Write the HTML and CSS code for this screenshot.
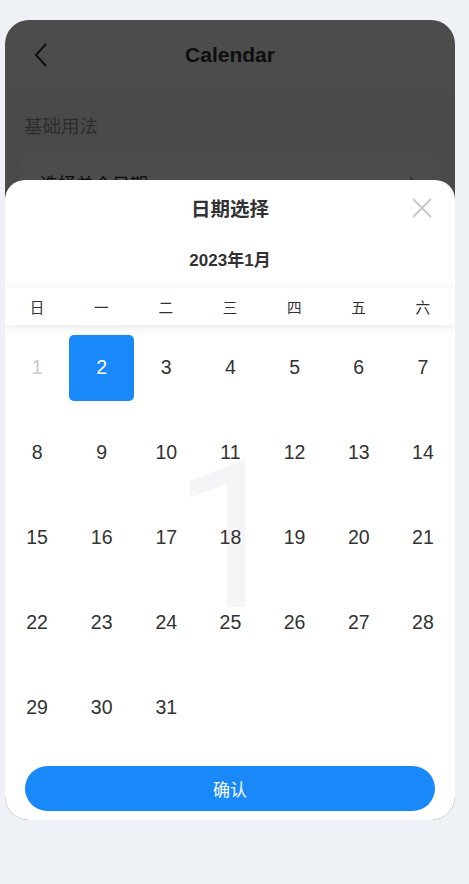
FILE: index.html
```html
<!DOCTYPE html>
<html lang="zh-CN">
<head>
<meta charset="utf-8">
<title>Calendar</title>
<link rel="stylesheet" href="styles.css">
</head>
<body>
<div class="phone">
  <div class="nav">
    <svg class="nav-back" width="16" height="26" viewBox="0 0 16 26"><path d="M13 2 L3 13 L13 24" fill="none" stroke="#323233" stroke-width="2"/></svg>
    <div class="nav-title">Calendar</div>
  </div>
  <div class="demo-title">基础用法</div>
  <div class="cell">
    <span class="cell-text">选择单个日期</span>
    <svg class="cell-arrow" width="10" height="16" viewBox="0 0 10 16"><path d="M2 2 L8 8 L2 14" fill="none" stroke="#969799" stroke-width="1.6"/></svg>
  </div>

  <div class="overlay"></div>

  <div class="popup">
    <div class="cal-header">
      <div class="cal-title">日期选择</div>
      <svg class="cal-close" width="22" height="22" viewBox="0 0 22 22"><path d="M2 2 L20 20 M20 2 L2 20" fill="none" stroke="#c8c9cc" stroke-width="2"/></svg>
    </div>
    <div class="cal-month">2023年1月</div>
    <div class="weekdays">
      <span>日</span><span>一</span><span>二</span><span>三</span><span>四</span><span>五</span><span>六</span>
    </div>
    <div class="days">
      <div class="month-mark">1</div>
      <div class="day disabled">1</div>
      <div class="day"><span class="selected">2</span></div>
      <div class="day">3</div>
      <div class="day">4</div>
      <div class="day">5</div>
      <div class="day">6</div>
      <div class="day">7</div>
      <div class="day">8</div>
      <div class="day">9</div>
      <div class="day">10</div>
      <div class="day">11</div>
      <div class="day">12</div>
      <div class="day">13</div>
      <div class="day">14</div>
      <div class="day">15</div>
      <div class="day">16</div>
      <div class="day">17</div>
      <div class="day">18</div>
      <div class="day">19</div>
      <div class="day">20</div>
      <div class="day">21</div>
      <div class="day">22</div>
      <div class="day">23</div>
      <div class="day">24</div>
      <div class="day">25</div>
      <div class="day">26</div>
      <div class="day">27</div>
      <div class="day">28</div>
      <div class="day">29</div>
      <div class="day">30</div>
      <div class="day">31</div>
    </div>
    <div class="cal-footer">
      <button class="confirm">确认</button>
    </div>
  </div>
</div>
</body>
</html>
```

FILE: styles.css
```css
* { box-sizing: border-box; }
html, body { margin: 0; padding: 0; }
body {
  background: #eef1f5;
  font-family: "Liberation Sans", "Noto Sans CJK SC", sans-serif;
  color: #323233;
  width: 469px;
  height: 884px;
  overflow: hidden;
}
.phone {
  position: relative;
  margin: 20px 0 0 5px;
  width: 450px;
  height: 800px;
  border-radius: 24px;
  overflow: hidden;
  background: #f7f8fa;
}
.nav {
  height: 70px;
  background: #ffffff;
  display: flex;
  align-items: center;
  justify-content: center;
  position: relative;
}
.nav-back {
  position: absolute;
  left: 28px;
  top: 22px;
}
.nav-title {
  font-size: 21px;
  font-weight: bold;
  color: #323233;
}
.demo-title {
  padding: 23px 20px 0 19px;
  height: 63px;
  font-size: 18.5px;
  line-height: 24px;
  color: #969799;
  font-family: "Noto Sans CJK SC", sans-serif;
}
.cell {
  margin: 0 15px;
  height: 60px;
  background: #ffffff;
  border-radius: 10px;
  display: flex;
  align-items: center;
  justify-content: space-between;
  padding: 0 22px 0 20px;
}
.cell-text {
  font-size: 18px;
  font-family: "Noto Sans CJK SC", sans-serif;
  color: #323233;
}
.overlay {
  position: absolute;
  inset: 0;
  background: rgba(0, 0, 0, 0.7);
}
.popup {
  position: absolute;
  left: 0;
  right: 0;
  bottom: 0;
  height: 640px;
  background: #ffffff;
  border-radius: 20px 20px 0 0;
  display: flex;
  flex-direction: column;
}
.cal-header {
  height: 54px;
  display: flex;
  align-items: center;
  justify-content: center;
  position: relative;
  flex: none;
}
.cal-title {
  font-size: 19.5px;
  font-weight: bold;
  font-family: "Noto Sans CJK SC", sans-serif;
  color: #323233;
}
.cal-close {
  position: absolute;
  right: 22px;
  top: 17px;
}
.cal-month {
  height: 54px;
  line-height: 54px;
  text-align: center;
  font-size: 17px;
  font-weight: bold;
  color: #323233;
  flex: none;
}
.weekdays {
  height: 37px;
  display: grid;
  grid-template-columns: repeat(7, 1fr);
  align-items: center;
  text-align: center;
  font-size: 14.6px;
  font-family: "Noto Sans CJK SC", sans-serif;
  box-shadow: 0 2px 10px rgba(125, 126, 128, 0.16);
  position: relative;
  z-index: 1;
  flex: none;
}
.days {
  position: relative;
  display: grid;
  grid-template-columns: repeat(7, 1fr);
  grid-auto-rows: 85px;
  height: 425px;
  flex: none;
}
.month-mark {
  position: absolute;
  left: 50%;
  top: 50%;
  transform: translate(-50%, -50%);
  font-family: Roboto, "Liberation Sans", sans-serif;
  font-size: 204px;
  line-height: 1;
  color: rgba(242, 243, 245, 0.8);
  pointer-events: none;
}
.day {
  position: relative;
  display: flex;
  align-items: center;
  justify-content: center;
  font-size: 19.5px;
  color: #323233;
}
.day.disabled { color: #c8c9cc; }
.selected {
  width: 65px;
  height: 66px;
  border-radius: 5px;
  background: #1989fa;
  color: #ffffff;
  display: flex;
  align-items: center;
  justify-content: center;
}
.cal-footer {
  flex: none;
  padding: 16px 20px 9px;
}
.confirm {
  display: block;
  width: 100%;
  height: 45px;
  border: none;
  border-radius: 23px;
  background: #1989fa;
  color: #ffffff;
  font-size: 17px;
  font-family: "Noto Sans CJK SC", sans-serif;
  padding: 0;
}
```
